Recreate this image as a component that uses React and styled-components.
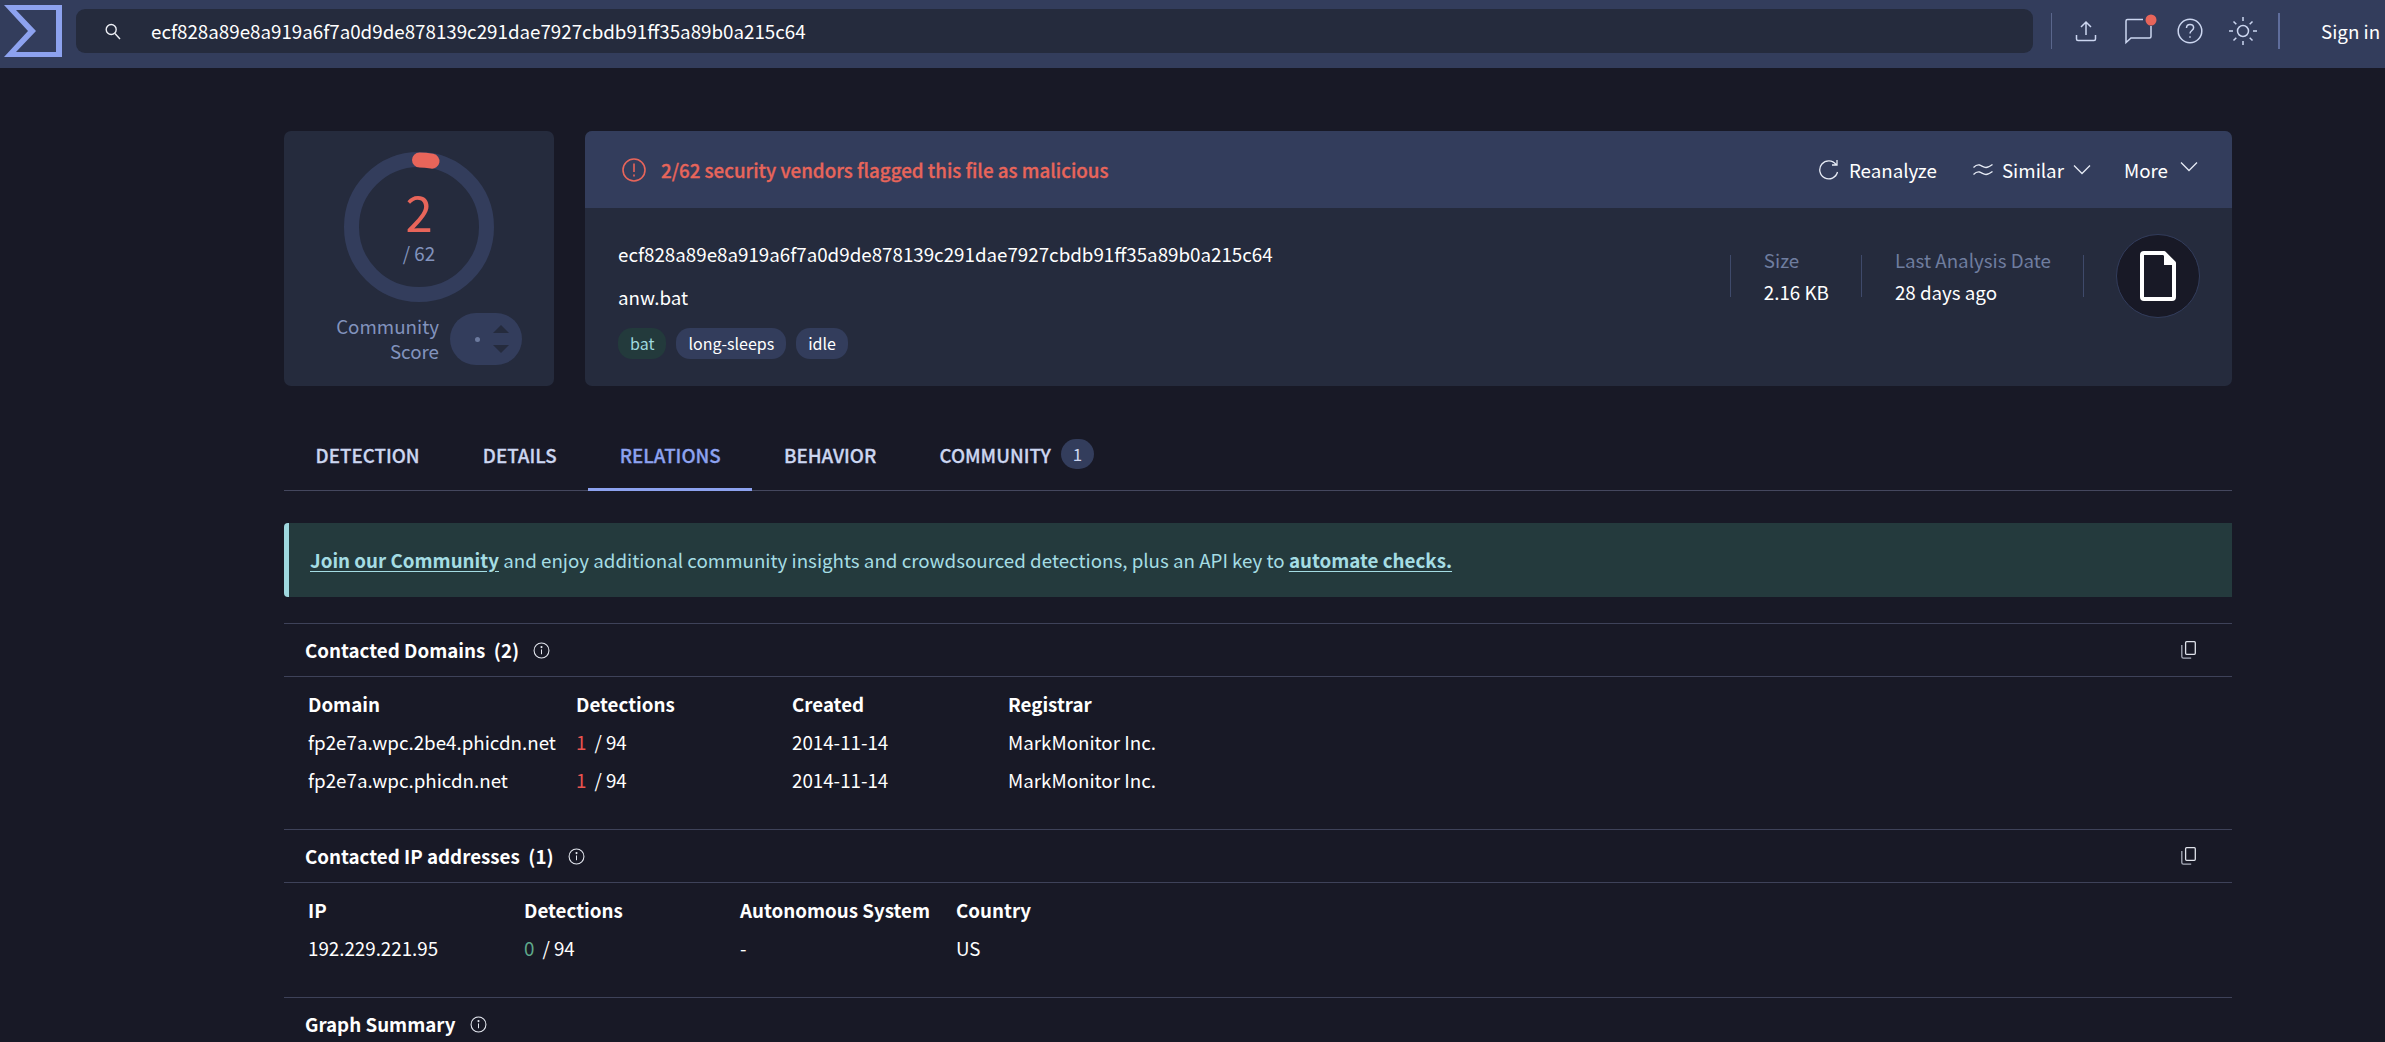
import React from 'react'
import styled, { createGlobalStyle } from 'styled-components'

const Global = createGlobalStyle`
  html, body {
    margin: 0;
    height: 1042px;
    overflow: hidden;
    background: #181926;
    color: #fff;
    font-family: "Noto Sans CJK JP", "Noto Sans", sans-serif;
    font-size: 18.75px;
  }
  * { box-sizing: border-box; }
`

const HASH = 'ecf828a89e8a919a6f7a0d9de878139c291dae7927cbdb91ff35a89b0a215c64'

const TopBar = styled.header`
  display: flex;
  align-items: center;
  height: 68px;
  padding: 0 0 6px 4px;
  background: #333d5c;
`
const Logo = styled.svg`
  flex: none;
  width: 58px;
  height: 52px;
  margin-right: 14px;
`
const SearchBox = styled.div`
  display: flex;
  align-items: center;
  width: 1957px;
  height: 44px;
  margin-right: 18px;
  padding: 0 0 2px 29px;
  gap: 30px;
  border-radius: 9px;
  background: #252b3d;
  svg { flex: none; margin-top: 2px; }
`
const NavDivider = styled.span`
  flex: none;
  width: ${p => p.$w || 1}px;
  height: 36px;
  background: ${p => p.$c || '#5a668c'};
`
const NavIcons = styled.div`
  display: flex;
  align-items: center;
  width: 226px;
  padding-left: 23px;
  gap: 25px;
  svg { display: block; flex: none; overflow: visible; }
`
const SignIn = styled.span`
  margin-left: 41px;
  padding-bottom: 2px;
  white-space: nowrap;
`

const Page = styled.main`
  width: 1948px;
  margin-left: 284px;
  padding-top: 63px;
`
const Summary = styled.section`
  display: flex;
  gap: 31px;
  height: 255px;
`
const ScoreCard = styled.div`
  flex: none;
  width: 270px;
  padding-top: 21px;
  border-radius: 7px;
  background: #252b3d;
`
const Ring = styled.div`
  position: relative;
  width: 150px;
  height: 150px;
  margin: 0 auto 0 60px;
  svg { display: block; }
`
const RingText = styled.div`
  position: absolute;
  inset: 0;
  display: flex;
  flex-direction: column;
  align-items: center;
  padding-top: 29px;
`
const BigNum = styled.span`
  font-size: 49px;
  line-height: 59px;
  color: #e8655a;
`
const OutOf = styled.span`
  line-height: 26px;
  color: #8293bd;
`
const ScoreRow = styled.div`
  display: flex;
  justify-content: flex-end;
  align-items: center;
  gap: 11px;
  margin-top: 11px;
  padding-right: 32px;
`
const ScoreLabel = styled.div`
  margin-top: -2px;
  text-align: right;
  line-height: 25px;
  color: #8293bd;
`
const VotePill = styled.div`
  display: flex;
  align-items: center;
  justify-content: flex-end;
  gap: 13px;
  width: 72px;
  height: 52px;
  padding-right: 13px;
  border-radius: 26px;
  background: #333d5c;
`
const VoteDot = styled.span`
  width: 5px;
  height: 5px;
  border-radius: 50%;
  background: #6c7a9e;
`
const VoteArrows = styled.svg`
  display: block;
  width: 16px;
  height: 28px;
`
const FileCard = styled.div`
  flex: 1;
  border-radius: 7px;
  overflow: hidden;
  background: #252b3d;
`
const CardHead = styled.div`
  display: flex;
  align-items: center;
  height: 77px;
  padding: 0 34px 0 37px;
  background: #333d5c;
`
const Alert = styled.div`
  display: flex;
  align-items: center;
  gap: 15px;
  font-weight: 500;
  -webkit-text-stroke: 0.3px #e8655a;
  color: #e8655a;
  flex: 1;
  svg { flex: none; }
`
const Action = styled.span`
  display: flex;
  align-items: center;
  gap: ${p => p.$gap || 10}px;
  margin-left: ${p => p.$ml || 0}px;
  svg { flex: none; display: block; }
`
const Chevron = styled.svg`
  width: 18px;
  height: 11px;
  margin-top: ${p => p.$mt || 0}px;
`
const CardBody = styled.div`
  display: flex;
  padding: 26px 32px 0 33px;
`
const FileInfo = styled.div`
  flex: 1;
  padding-top: 5px;
`
const Line = styled.div`
  line-height: 30px;
  margin-bottom: ${p => p.$mb}px;
`
const Tags = styled.div`
  display: flex;
  gap: 10px;
`
const Tag = styled.span`
  height: 31px;
  padding: 0 12px;
  border-radius: 14px;
  font-size: 16px;
  line-height: 31px;
  background: ${p => (p.$green ? '#233a3c' : '#333d5c')};
  color: ${p => (p.$green ? '#9fd8df' : '#fff')};
`
const Stats = styled.div`
  display: flex;
  align-items: flex-start;
  padding-top: 21px;
`
const Stat = styled.div`
  height: 42px;
  padding-left: 33px;
  padding-right: 32px;
  border-left: 1px solid #3f4a6b;
`
const StatLabel = styled.div`
  line-height: 22px;
  margin-top: -6px;
  color: #6f7d9f;
`
const StatValue = styled.div`
  line-height: 26px;
  margin-top: 8px;
`
const StatEnd = styled.span`
  width: 1px;
  height: 42px;
  background: #3f4a6b;
`
const FileBadge = styled.div`
  flex: none;
  display: flex;
  align-items: center;
  justify-content: center;
  width: 84px;
  height: 84px;
  margin-left: 32px;
  border: 1px solid #333d5c;
  border-radius: 50%;
  background: #181926;
`

const Tabs = styled.nav`
  display: flex;
  align-items: center;
  height: 70px;
  margin-top: 35px;
  border-bottom: 1px solid #44475e;
`
const Tab = styled.span`
  position: relative;
  display: flex;
  align-items: center;
  gap: 10px;
  height: 70px;
  padding: 0 31.6px;
  font-weight: 500;
  text-transform: uppercase;
  -webkit-text-stroke: 0.3px currentColor;
  color: ${p => (p.$active ? '#8da2ef' : '#ccd6f0')};
  border-bottom: 3px solid ${p => (p.$active ? '#8da2ef' : 'transparent')};
`
const TabBadge = styled.span`
  width: 33px;
  height: 30px;
  border-radius: 15px;
  background: #333d5c;
  color: #ccd6f0;
  font-size: 17px;
  font-weight: 400;
  line-height: 30px;
  text-align: center;
  -webkit-text-stroke: 0;
`
const Banner = styled.div`
  display: flex;
  align-items: center;
  height: 74px;
  margin-top: 32px;
  padding: 0 0 2px 21px;
  border-left: 5px solid #9fd8df;
  border-radius: 4px 0 0 4px;
  background: #243a3d;
  color: #a5dde4;
  a {
    color: inherit;
    font-weight: 700;
    text-decoration: underline;
    text-underline-offset: 3px;
  }
`
const SectionHead = styled.div`
  display: flex;
  align-items: center;
  height: 54px;
  margin-top: ${p => p.$mt || 0}px;
  padding: 0 36px 2px 21px;
  border-top: 1px solid #3e4259;
  border-bottom: 1px solid #3e4259;
  font-weight: 700;
  svg { display: block; margin-top: 2px; }
`
const InfoIcon = styled.svg`
  width: 17px;
  height: 17px;
  margin-left: 14px;
`
const CopyIcon = styled.svg`
  width: 15px;
  height: 18px;
  margin-left: auto;
`
const Table = styled.div`
  display: grid;
  grid-template-columns: ${p => p.$first}px repeat(3, 216px);
  grid-auto-rows: 38px;
  align-items: center;
  padding: 7px 0 0 24px;
  height: ${p => p.$h}px;
`
const Th = styled.div`
  font-weight: 700;
`
const Td = styled.div`
  white-space: nowrap;
`
const Num = styled.span`
  margin-right: 8px;
  color: ${p => (p.$bad ? '#e8544f' : '#5fa88a')};
`

const Info = () => (
  <InfoIcon viewBox="0 0 16 16" fill="none" stroke="#e4e7ef" strokeWidth="1">
    <circle cx="8" cy="8" r="7" />
    <path d="M8 7v4.5" />
    <circle cx="8" cy="4.800" r=".5" fill="#e4e7ef" />
  </InfoIcon>
)

const Copy = () => (
  <CopyIcon viewBox="0 0 15 18" fill="none" stroke="#dfe2ea" strokeWidth="1.300">
    <rect x="4.600" y=".7" width="9.700" height="12.600" rx="1" />
    <path d="M.8 4v11.500c0 1 .6 1.700 1.600 1.700h7.800" stroke="#a9aebb" />
  </CopyIcon>
)

const Down = ({ mt }) => (
  <Chevron $mt={mt} viewBox="0 0 18 11" fill="none" stroke="#e6ebf5" strokeWidth="1.300">
    <path d="M1 1.500l8 8 8-8" />
  </Chevron>
)

export default function App() {
  return (
    <>
      <Global />
      <TopBar>
        <Logo viewBox="0 0 58 52">
          <path
            fillRule="evenodd"
            fill="#8da2ef"
            d="M0 0H58V52H0L24 26ZM12 5 32 26 12 47H52V5Z"
          />
        </Logo>
        <SearchBox>
          <svg width="16" height="17" viewBox="0 0 16 17" fill="none" stroke="#eef0f6" strokeWidth="1.400">
            <circle cx="6.200" cy="6.500" r="5" />
            <path d="M10 10.500l5 5.500" />
          </svg>
          {HASH}
        </SearchBox>
        <NavDivider />
        <NavIcons>
          <svg width="22" height="22" viewBox="0 0 22 22" fill="none" stroke="#ccd6f0" strokeWidth="1.500">
            <path d="M11 15V2M6 7l5-5 5 5M1.500 15v4c0 1 .5 1.500 1.500 1.500h16c1 0 1.500-.5 1.500-1.500v-4" />
          </svg>
          <svg width="30" height="28" viewBox="0 0 30 28" fill="none">
            <path d="M21 2.500H5.500C4.500 2.500 4 3 4 4v21.500l5-4.500h18.500c1 0 1.500-.5 1.500-1.500V9" stroke="#ccd6f0" strokeWidth="1.500" />
            <circle cx="29" cy="3" r="5.500" fill="#e8655a" />
          </svg>
          <svg width="26" height="26" viewBox="0 0 26 26" fill="none" stroke="#ccd6f0" strokeWidth="1.500">
            <circle cx="13" cy="13" r="11.800" />
            <path d="M9.500 10c0-2.200 1.600-3.500 3.600-3.500s3.500 1.300 3.500 3.200c0 2.800-3.600 2.800-3.600 5.800" />
            <path d="M13 18.200v1.600" />
          </svg>
          <svg width="30" height="30" viewBox="0 0 30 30" fill="none" stroke="#ccd6f0" strokeWidth="1.500">
            <circle cx="15" cy="15" r="5.500" />
            <path d="M15 1v4M15 25v4M1 15h4M25 15h4M5.500 5.500l2.800 2.800M21.700 21.700l2.800 2.800M5.500 24.500l2.800-2.800M21.700 8.300l2.800-2.800" />
          </svg>
        </NavIcons>
        <NavDivider $w={2} $c="#5f6d9c" />
        <SignIn>Sign in</SignIn>
      </TopBar>

      <Page>
        <Summary>
          <ScoreCard>
            <Ring>
              <svg width="150" height="150" viewBox="0 0 150 150" fill="none">
                <circle cx="75" cy="75" r="67.500" stroke="#333d5c" strokeWidth="15" />
                <path d="M75.500 8c4 0 8 .4 12.500 1.200" stroke="#e8655a" strokeWidth="15" strokeLinecap="round" />
              </svg>
              <RingText>
                <BigNum>2</BigNum>
                <OutOf>/ 62</OutOf>
              </RingText>
            </Ring>
            <ScoreRow>
              <ScoreLabel>
                Community
                <br />
                Score
              </ScoreLabel>
              <VotePill>
                <VoteDot />
                <VoteArrows viewBox="0 0 16 28">
                  <path d="M8 0l8 8H0ZM0 20h16l-8 8Z" fill="#252b3d" />
                </VoteArrows>
              </VotePill>
            </ScoreRow>
          </ScoreCard>

          <FileCard>
            <CardHead>
              <Alert>
                <svg width="24" height="24" viewBox="0 0 24 24" fill="none" stroke="#e8655a" strokeWidth="1.600">
                  <circle cx="12" cy="12" r="11" />
                  <path d="M12 5.500v8.500M12 16.500v2" />
                </svg>
                2/62 security vendors flagged this file as malicious
              </Alert>
              <Action $gap={10}>
                <svg width="20" height="21" viewBox="0 0 20 21" fill="none" stroke="#e6ebf5" strokeWidth="1.300">
                  <path d="M17 5.500A9 9 0 1 0 18.500 13M18 1v5h-5" />
                </svg>
                Reanalyze
              </Action>
              <Action $ml={36} $gap={9}>
                <svg width="20" height="14" viewBox="0 0 20 14" fill="none" stroke="#e6ebf5" strokeWidth="1.300">
                  <path d="M.5 4.500c2-2 4-3 6-2.500s4 2.500 6.500 2.500 4.500-1.500 6.500-3M.5 11.500c2-2 4-3 6-2.500s4 2.500 6.500 2.500 4.500-1.500 6.500-3" />
                </svg>
                Similar
                <Down />
              </Action>
              <Action $ml={33} $gap={12}>
                More
                <Down mt={-6} />
              </Action>
            </CardHead>
            <CardBody>
              <FileInfo>
                <Line $mb={13}>{HASH}</Line>
                <Line $mb={16}>anw.bat</Line>
                <Tags>
                  <Tag $green>bat</Tag>
                  <Tag>long-sleeps</Tag>
                  <Tag>idle</Tag>
                </Tags>
              </FileInfo>
              <Stats>
                <Stat>
                  <StatLabel>Size</StatLabel>
                  <StatValue>2.16 KB</StatValue>
                </Stat>
                <Stat>
                  <StatLabel>Last Analysis Date</StatLabel>
                  <StatValue>28 days ago</StatValue>
                </Stat>
                <StatEnd />
              </Stats>
              <FileBadge>
                <svg width="36" height="50" viewBox="0 0 36 50">
                  <path
                    d="M2 4a2 2 0 0 1 2-2h20l10 10v34a2 2 0 0 1-2 2H4a2 2 0 0 1-2-2Z"
                    fill="#181926"
                    stroke="#fff"
                    strokeWidth="4"
                    strokeLinejoin="round"
                  />
                  <path d="M24 0l12 14H24Z" fill="#fff" />
                </svg>
              </FileBadge>
            </CardBody>
          </FileCard>
        </Summary>

        <Tabs>
          <Tab>Detection</Tab>
          <Tab>Details</Tab>
          <Tab $active>Relations</Tab>
          <Tab>Behavior</Tab>
          <Tab>
            Community
            <TabBadge>1</TabBadge>
          </Tab>
        </Tabs>

        <Banner>
          <span>
            <a>Join our Community</a> and enjoy additional community insights and crowdsourced detections, plus an API key to <a>automate checks.</a>
          </span>
        </Banner>

        <SectionHead $mt={26}>
          Contacted Domains&nbsp; (2)
          <Info />
          <Copy />
        </SectionHead>
        <Table $first={268} $h={152}>
          <Th>Domain</Th>
          <Th>Detections</Th>
          <Th>Created</Th>
          <Th>Registrar</Th>
          <Td>fp2e7a.wpc.2be4.phicdn.net</Td>
          <Td><Num $bad>1</Num>/ 94</Td>
          <Td>2014-11-14</Td>
          <Td>MarkMonitor Inc.</Td>
          <Td>fp2e7a.wpc.phicdn.net</Td>
          <Td><Num $bad>1</Num>/ 94</Td>
          <Td>2014-11-14</Td>
          <Td>MarkMonitor Inc.</Td>
        </Table>

        <SectionHead>
          Contacted IP addresses&nbsp; (1)
          <Info />
          <Copy />
        </SectionHead>
        <Table $first={216} $h={114}>
          <Th>IP</Th>
          <Th>Detections</Th>
          <Th>Autonomous System</Th>
          <Th>Country</Th>
          <Td>192.229.221.95</Td>
          <Td><Num>0</Num>/ 94</Td>
          <Td>-</Td>
          <Td>US</Td>
        </Table>

        <SectionHead>
          Graph Summary
          <Info />
        </SectionHead>
      </Page>
    </>
  )
}
